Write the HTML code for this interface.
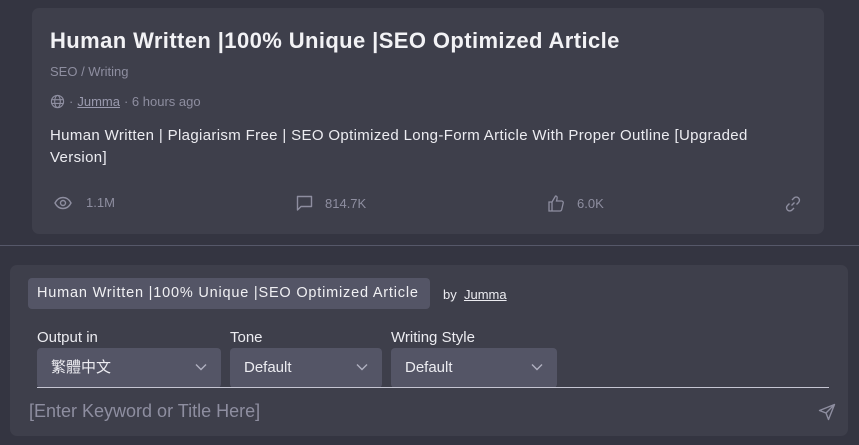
<!DOCTYPE html>
<html><head><meta charset="utf-8"><style>
*{margin:0;padding:0;box-sizing:border-box}
body{width:859px;height:445px;background:#343541;font-family:"Liberation Sans","Noto Sans CJK TC",sans-serif;position:relative;overflow:hidden;color:#ececf1}
.card{position:absolute;left:32px;top:8px;width:792px;height:226px;background:#3e3f4b;border-radius:7px}
.t{position:absolute;left:18px;top:20px;font-size:22px;font-weight:bold;color:#f2f2f5;letter-spacing:0.4px}
.cat{position:absolute;left:18px;top:56px;font-size:13px;color:#8e8ea0}
.meta{position:absolute;left:18px;top:86px;font-size:13px;color:#8e8ea0;display:flex;align-items:center;gap:4px}
.meta u{color:#9a9aae}
.desc{position:absolute;left:18px;top:117px;width:735px;font-size:15px;line-height:22px;color:#ececf1;letter-spacing:0.35px}
.st{position:absolute;top:187px;font-size:13px;color:#8e8ea0;display:flex;align-items:center;gap:12px}
.sep{position:absolute;left:0;top:245px;width:859px;height:1px;background:#565869}
.panel{position:absolute;left:10px;top:265px;width:838px;height:171px;background:#3e3f4b;border-radius:7px}
.chip{position:absolute;left:18px;top:13px;height:31px;width:402px;background:#545566;border-radius:4px;font-size:14.5px;line-height:31px;padding-left:9px;color:#f0f0f3;letter-spacing:0.8px;white-space:nowrap}
.by{position:absolute;left:433px;top:22px;font-size:13px}
.lbl{position:absolute;top:64px;font-size:15px}
.sel{position:absolute;top:83px;height:40px;background:#545566;border-radius:4px;font-size:15px;line-height:40px;padding-left:14px}
.sel svg{position:absolute;right:14px;top:15px}
.line{position:absolute;left:27px;top:122px;width:792px;height:1px;background:#c5c5d2}
.inp{position:absolute;left:19px;top:136px;font-size:18px;color:#8e8ea0}
</style></head><body>
<div class="card">
<div class="t">Human Written |100% Unique |SEO Optimized Article</div>
<div class="cat">SEO / Writing</div>
<div class="meta"><svg width="15" height="15" viewBox="0 0 16 16" fill="none" stroke="#8e8ea0" stroke-width="1.2"><circle cx="8" cy="8" r="6.5"/><ellipse cx="8" cy="8" rx="3" ry="6.5"/><path d="M1.5 6h13M1.5 10h13"/></svg> · <u>Jumma</u> · 6 hours ago</div>
<div class="desc">Human Written | Plagiarism Free | SEO Optimized Long-Form Article With Proper Outline [Upgraded Version]</div>
<div class="st" style="left:22px"><svg width="18" height="14" viewBox="0 0 18 14" fill="none" stroke="#8e8ea0" stroke-width="1.4"><path d="M1 7C3 3 6 1.5 9 1.5S15 3 17 7C15 11 12 12.5 9 12.5S3 11 1 7Z"/><circle cx="9" cy="7" r="2.5"/></svg><span style="margin-left:2px">1.1M</span></div>
<div class="st" style="left:264px"><svg width="17" height="17" viewBox="0 0 17 17" fill="none" stroke="#8e8ea0" stroke-width="1.4"><path d="M1.5 1.5h14v10H5l-3.5 3.5Z" stroke-linejoin="round"/></svg><span>814.7K</span></div>
<div class="st" style="left:516px"><svg width="17" height="17" viewBox="0 0 17 17" fill="none" stroke="#8e8ea0" stroke-width="1.3"><path d="M1 7h3v9H1zM4 7l3.5-6c1.5 0 2 1 1.5 3l-.5 2h5c1.2 0 2 1 1.7 2l-1.5 6.5c-.2.7-.8 1.5-1.7 1.5H4"/></svg><span>6.0K</span></div>
<div class="st" style="left:752px"><svg width="18" height="18" viewBox="0 0 18 18" fill="none" stroke="#8e8ea0" stroke-width="1.4"><path d="M7.5 10.5l3-3M8 5l2-2a3 3 0 0 1 4.5 4.5l-2 2M10 13l-2 2A3 3 0 0 1 3.5 10.5l2-2"/></svg></div>
</div>
<div class="sep"></div>
<div class="panel">
<div class="chip">Human Written |100% Unique |SEO Optimized Article</div>
<div class="by">by&nbsp; <u>Jumma</u></div>
<div class="lbl" style="left:27px">Output in</div>
<div class="lbl" style="left:220px">Tone</div>
<div class="lbl" style="left:381px">Writing Style</div>
<div class="sel" style="left:27px;width:184px">繁體中文<svg width="12" height="8" viewBox="0 0 12 8" fill="none" stroke="#b0b0c0" stroke-width="1.4"><path d="M1 1.5l5 5 5-5"/></svg></div>
<div class="sel" style="left:220px;width:152px">Default<svg width="12" height="8" viewBox="0 0 12 8" fill="none" stroke="#b0b0c0" stroke-width="1.4"><path d="M1 1.5l5 5 5-5"/></svg></div>
<div class="sel" style="left:381px;width:166px">Default<svg width="12" height="8" viewBox="0 0 12 8" fill="none" stroke="#b0b0c0" stroke-width="1.4"><path d="M1 1.5l5 5 5-5"/></svg></div>
<div class="line"></div>
<div class="inp">[Enter Keyword or Title Here]</div>
<svg style="position:absolute;left:808px;top:138px" width="18" height="18" viewBox="0 0 18 18" fill="none" stroke="#8e8ea0" stroke-width="1.4" stroke-linejoin="round"><path d="M16.5 1.5L1.5 7.5l6.5 2.5 2.5 6.5Z M8 10l8.5-8.5"/></svg>
</div>
</body></html>
